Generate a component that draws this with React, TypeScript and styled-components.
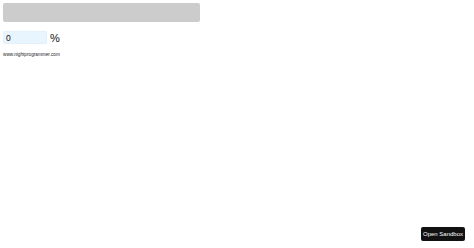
import React, { useState } from 'react';
import styled, { createGlobalStyle } from 'styled-components';

const GlobalStyle = createGlobalStyle`
  html, body {
    margin: 0;
    padding: 0;
    background: #ffffff;
    font-family: "Liberation Sans", Arial, sans-serif;
  }
`;

const Page = styled.div`
  position: relative;
  width: 474px;
  height: 248px;
  padding: 3px;
  box-sizing: border-box;
  display: flex;
  flex-direction: column;
`;

const Track = styled.div`
  width: 197px;
  height: 19px;
  background: #cccccc;
  border-radius: 2px;
  overflow: hidden;
`;

const Fill = styled.div`
  height: 100%;
  background: #4caf50;
`;

const Row = styled.div`
  display: flex;
  align-items: center;
  gap: 3px;
  margin-top: 9px;
`;

const PercentInput = styled.input`
  width: 44px;
  height: 13px;
  box-sizing: border-box;
  border: 1px solid #e2f1fc;
  background: #e8f4fe;
  border-radius: 1px;
  padding: 0 2px;
  font-family: "Liberation Sans", Arial, sans-serif;
  font-size: 8.5px;
  color: #111;
  outline: none;
`;

const Unit = styled.span`
  font-size: 11px;
  color: #111;
`;

const Credit = styled.a`
  margin-top: 8px;
  font-size: 4.7px;
  color: #222;
  text-decoration: none;
`;

const SandboxButton = styled.button`
  position: absolute;
  right: 9px;
  bottom: 7px;
  width: 44px;
  height: 14px;
  padding: 0;
  border: none;
  border-radius: 2px;
  background: #111111;
  color: #ffffff;
  font-family: "Liberation Sans", Arial, sans-serif;
  font-size: 6px;
`;

export default function App() {
  const [value, setValue] = useState('0');
  const pct = Math.max(0, Math.min(100, Number(value) || 0));

  return (
    <Page>
      <GlobalStyle />
      <Track>
        <Fill style={{ width: `${pct}%` }} />
      </Track>
      <Row>
        <PercentInput value={value} onChange={(e) => setValue(e.target.value)} />
        <Unit>%</Unit>
      </Row>
      <Credit href="#">www.nightprogrammer.com</Credit>
      <SandboxButton>Open Sandbox</SandboxButton>
    </Page>
  );
}
